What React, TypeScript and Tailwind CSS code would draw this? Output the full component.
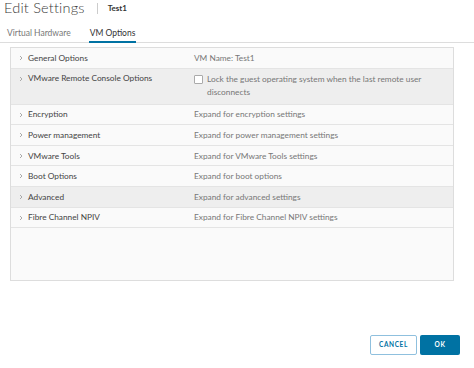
import React from 'react';

const rows: { name: string; value: string; tall?: boolean; shade?: boolean }[] = [
  { name: 'General Options', value: 'VM Name: Test1' },
  { name: 'VMware Remote Console Options', value: '', tall: true, shade: true },
  { name: 'Encryption', value: 'Expand for encryption settings' },
  { name: 'Power management', value: 'Expand for power management settings' },
  { name: 'VMware Tools', value: 'Expand for VMware Tools settings' },
  { name: 'Boot Options', value: 'Expand for boot options' },
  { name: 'Advanced', value: 'Expand for advanced settings', shade: true },
  { name: 'Fibre Channel NPIV', value: 'Expand for Fibre Channel NPIV settings' },
];

const Chevron = () => (
  <svg width="6" height="6" viewBox="0 0 6 6" className="shrink-0">
    <path d="M2 1 L4 3 L2 5" fill="none" stroke="#a0a0a0" strokeWidth="0.9" />
  </svg>
);

export default function App() {
  return (
    <div className="w-[474px] h-[368px] bg-white overflow-hidden font-['Lato',sans-serif] text-[#333]">
      {/* header */}
      <div className="flex items-end h-[16px] pl-[4px]">
        <span className="text-[14.5px] leading-[16px] font-light text-[#3a3a3a] tracking-[0.2px]">Edit Settings</span>
        <span className="w-px h-[11px] bg-[#ccc] ml-[12px] mr-[10px] mb-[2px]" />
        <span className="text-[8px] leading-[14px] font-bold text-[#333] mb-[1px]">Test1</span>
      </div>

      {/* tabs */}
      <div className="flex mt-[8px] border-b border-[#ddd] h-[19px] pl-[7px] gap-[18px] text-[8.5px]">
        <div className="flex items-center text-[#777]">Virtual Hardware</div>
        <div className="flex items-center text-[#333] border-b-[2px] border-[#0072a3] px-[1px] -mb-px pt-[2px]">VM Options</div>
      </div>

      {/* options panel */}
      <div className="ml-[10px] mt-[4px] w-[444px] h-[234px] border border-[#ddd] bg-[#fafafa] text-[8.3px]">
        {rows.map((r) => (
          <div
            key={r.name}
            className={`flex items-start border-b border-[#e4e4e4] ${r.tall ? 'h-[36px]' : 'h-[20.6px]'} ${r.shade ? 'bg-[#eeeeee]' : ''}`}
          >
            <div className="w-[183px] h-[20px] flex items-center gap-[4px] pl-[7px]">
              <Chevron />
              <span className="text-[#444]">{r.name}</span>
            </div>
            {r.tall ? (
              <div className="flex items-start gap-[4px] pt-[4px] text-[#777]">
                <span className="w-[9px] h-[9px] border border-[#aaa] rounded-[1px] bg-white shrink-0 mt-[2px]" />
                <span className="leading-[13px] w-[230px]">
                  Lock the guest operating system when the last remote user disconnects
                </span>
              </div>
            ) : (
              <div className="h-[20px] flex items-center text-[#777]">{r.value}</div>
            )}
          </div>
        ))}
      </div>

      {/* footer buttons */}
      <div className="flex justify-end gap-[3px] pr-[14px] mt-[54px]">
        <button className="w-[47px] h-[20px] border border-[#8fc0de] rounded-[2px] text-[#0072a3] text-[6.5px] font-bold tracking-[0.6px] bg-white">
          CANCEL
        </button>
        <button className="w-[40px] h-[20px] rounded-[2px] bg-[#0072a3] text-white text-[6.5px] font-bold tracking-[0.6px]">
          OK
        </button>
      </div>
    </div>
  );
}
